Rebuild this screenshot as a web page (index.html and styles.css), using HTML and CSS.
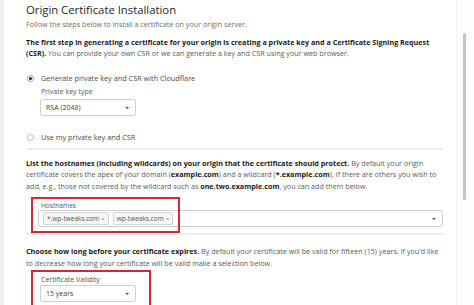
FILE: index.html
```html
<!DOCTYPE html>
<html lang="en">
<head>
<meta charset="utf-8">
<title>Origin Certificate Installation</title>
<link rel="stylesheet" href="styles.css">
</head>
<body>
<div class="frame">
  <div class="edge"></div>
  <main class="panel">
    <h1 class="title">Origin Certificate Installation</h1>
    <p class="sub">Follow the steps below to install a certificate on your origin server.</p>
    <p class="text lead"><b>The first step in generating a certificate for your origin is creating a private key and a Certificate Signing Request (CSR).</b> You can provide your own CSR or we can generate a key and CSR using your web browser.</p>

    <div class="options">
      <div class="radio checked"><span class="dot"></span><span>Generate private key and CSR with Cloudflare</span></div>
      <div class="field keytype">
        <div class="flabel">Private key type</div>
        <div class="select"><span>RSA (2048)</span><span class="caret"></span></div>
      </div>
      <div class="radio second"><span class="dot"></span><span>Use my private key and CSR</span></div>
    </div>

    <hr class="rule">

    <p class="text hostsinfo"><b>List the hostnames (including wildcards) on your origin that the certificate should protect.</b> By default your origin certificate covers the apex of your domain (<b>example.com</b>) and a wildcard (<b>*.example.com</b>). If there are others you wish to add, e.g., those not covered by the wildcard such as <b>one.two.example.com</b>, you can add them below.</p>

    <div class="field hosts">
      <div class="flabel">Hostnames</div>
      <div class="tagbox">
        <span class="tag">*.wp-tweaks.com <span class="x">×</span></span>
        <span class="tag">wp-tweaks.com <span class="x">×</span></span>
        <span class="caret"></span>
      </div>
    </div>

    <hr class="rule rule2">

    <p class="text validinfo"><b>Choose how long before your certificate expires.</b> By default your certificate will be valid for fifteen (15) years. If you'd like to decrease how long your certificate will be valid make a selection below.</p>

    <div class="field validity">
      <div class="flabel">Certificate Validity</div>
      <div class="select"><span>15 years</span><span class="caret"></span></div>
    </div>

    <div class="highlight hl-hosts"></div>
    <div class="highlight hl-validity"></div>
  </main>
  <div class="gutter">
    <div class="thumb"></div>
  </div>
</div>
</body>
</html>
```

FILE: styles.css
```css
html, body {
  margin: 0;
  padding: 0;
}

body {
  width: 474px;
  height: 305px;
  overflow: hidden;
  background: #ffffff;
  font-family: "Open Sans", "Noto Sans", "Liberation Sans", sans-serif;
  color: #555555;
}

.frame {
  display: flex;
  height: 305px;
}

.edge {
  width: 4px;
  background: #f1f1f1;
}

.panel {
  position: relative;
  flex: 0 0 452px;
  box-sizing: border-box;
  padding: 2px 11px 0 22px;
  background: #ffffff;
}

.title {
  margin: 0;
  font-size: 11.3px;
  line-height: 16px;
  font-weight: 500;
  color: #1f1f1f;
}

.sub {
  margin: 1px 0 0;
  font-size: 7.2px;
  line-height: 10px;
  color: #6e6e6e;
}

.text {
  margin: 0;
  font-size: 7.2px;
  color: #5a5a5a;
}

.text b {
  color: #1a1a1a;
  font-weight: 700;
}

.lead {
  margin-top: 8px;
  line-height: 11px;
}

.options {
  margin-top: 14px;
}

.radio {
  display: flex;
  align-items: center;
  gap: 7.5px;
  padding-left: 0.5px;
  height: 10px;
  font-size: 7.3px;
  color: #4a4a4a;
}

.radio .dot {
  box-sizing: border-box;
  flex: none;
  width: 7px;
  height: 7px;
  border-radius: 50%;
  border: 1px solid #b8b8b8;
  background: #ffffff;
  display: flex;
  align-items: center;
  justify-content: center;
}

.radio.checked .dot {
  border-color: #9a9a9a;
}

.radio.checked .dot::after {
  content: "";
  width: 3px;
  height: 3px;
  border-radius: 50%;
  background: #222222;
}

.radio.second {
  margin-top: 16px;
}

.field {
  margin-left: 14px;
}

.keytype {
  margin-top: 4px;
}

.flabel {
  padding-left: 1px;
  font-size: 7px;
  line-height: 10px;
  color: #555555;
}

.select {
  box-sizing: border-box;
  width: 96px;
  height: 17px;
  margin-top: 2px;
  padding: 0 6px 0 5px;
  border: 1px solid #cfcfcf;
  border-radius: 2px;
  display: flex;
  align-items: center;
  justify-content: space-between;
  font-size: 7px;
  color: #444444;
}

.caret {
  width: 0;
  height: 0;
  border-left: 2px solid transparent;
  border-right: 2px solid transparent;
  border-top: 2.5px solid #555555;
}

.rule {
  margin: 6px 2px 0 0;
  height: 0;
  border: 0;
  border-top: 2px solid #ececec;
}

.hostsinfo {
  margin-top: 7.5px;
  line-height: 11.5px;
}

.hosts {
  margin: 9px 2px 0 12px;
}

.hosts .flabel {
  line-height: 9px;
  padding-left: 3px;
  font-size: 6.6px;
}

.tagbox {
  box-sizing: border-box;
  height: 17px;
  padding: 0 6px 0 4px;
  border: 1px solid #cfcfcf;
  border-radius: 3px;
  display: flex;
  align-items: center;
  gap: 4px;
}

.tag {
  box-sizing: border-box;
  height: 13px;
  padding: 0 3px;
  border: 1px solid #d3d3d3;
  border-radius: 2px;
  background: #f6f6f6;
  display: flex;
  align-items: center;
  gap: 2px;
  font-size: 6.5px;
  color: #555555;
}

.tag .x {
  font-size: 6px;
  color: #777777;
}

.tagbox .caret {
  margin-left: auto;
}

.rule2 {
  margin-top: 6px;
}

.validinfo {
  margin-top: 10px;
  line-height: 12px;
}

.validity {
  margin-top: 6px;
}

.validity .flabel {
  line-height: 9px;
}

.validity .select {
  margin-top: 1px;
}

.highlight {
  position: absolute;
  box-sizing: border-box;
  border: 2px solid #cc2a36;
}

.hl-hosts {
  left: 27px;
  top: 197px;
  width: 149px;
  height: 36px;
}

.hl-validity {
  left: 27px;
  top: 270px;
  width: 120px;
  height: 45px;
}

.gutter {
  flex: 1;
  box-sizing: border-box;
  padding: 33px 0 0 6px;
  border-left: 1px solid #f3f3f3;
  background: #fdfdfd;
}

.thumb {
  width: 3px;
  height: 167px;
  border-radius: 2px;
  background: #c4c4c4;
}
```
